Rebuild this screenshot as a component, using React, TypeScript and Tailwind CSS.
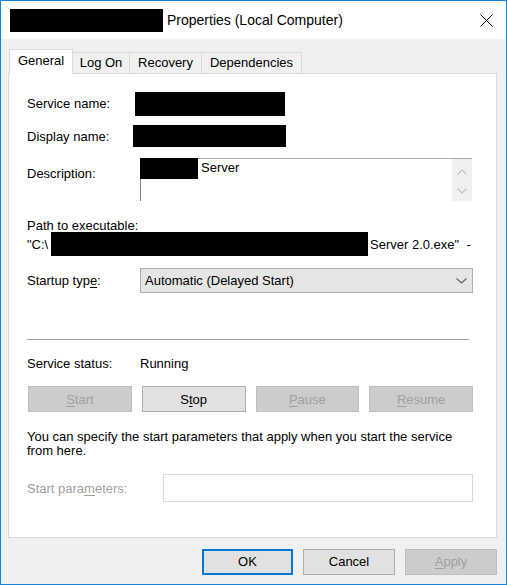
const font = "font-['Liberation_Sans',Arial,sans-serif]";

function Tab({ label, active, w }: { label: string; active?: boolean; w: string }) {
  return active ? (
    <div className={`relative z-10 -mb-px flex h-[25px] items-center justify-center border border-b-0 border-[#d9d9d9] bg-white pb-[2px] text-[13px] ${w}`}>
      {label}
    </div>
  ) : (
    <div className={`-ml-px flex h-[21px] items-center justify-center border border-b-0 border-[#d9d9d9] bg-[#f0f0f0] text-[13px] ${w}`}>
      {label}
    </div>
  );
}

function Btn({ children, disabled, primary, className = '' }: { children: React.ReactNode; disabled?: boolean; primary?: boolean; className?: string }) {
  const look = disabled
    ? 'bg-[#cccccc] border border-[#bfbfbf] text-[#a0a0a0]'
    : primary
    ? 'bg-[#e1e1e1] border-2 border-[#0078d7] text-black'
    : 'bg-[#e1e1e1] border border-[#adadad] text-black';
  return <div className={`flex h-[26px] items-center justify-center text-[13px] ${look} ${className}`}>{children}</div>;
}

function Chevron({ up, color = '#c2c2c2' }: { up?: boolean; color?: string }) {
  return (
    <svg width="10" height="6" viewBox="0 0 10 6">
      <path d={up ? 'M0.5 5.5 L5 1 L9.5 5.5' : 'M0.5 0.5 L5 5 L9.5 0.5'} fill="none" stroke={color} strokeWidth="1.2" />
    </svg>
  );
}

export default function App() {
  return (
    <div className={`flex h-[585px] w-[507px] flex-col border border-[#1883d7] bg-[#f0f0f0] text-black ${font}`}>
      {/* title bar */}
      <div className="flex h-[38px] items-center bg-white">
        <div className="ml-[9px] h-[23px] w-[153px] bg-black" />
        <div className="ml-[4px] text-[14px] leading-none">Properties (Local Computer)</div>
        <div className="ml-auto mr-[13px] flex items-center">
          <svg width="13" height="13" viewBox="0 0 13 13">
            <path d="M0.5 0.5 L12.5 12.5 M12.5 0.5 L0.5 12.5" stroke="#000" strokeWidth="1" />
          </svg>
        </div>
      </div>

      <div className="flex flex-1 flex-col pl-[7px] pr-[9px]">
        {/* tabs */}
        <div className="flex h-[34px] items-end pl-px">
          <Tab label="General" active w="w-[64px]" />
          <Tab label="Log On" w="w-[58px]" />
          <Tab label="Recovery" w="w-[73px]" />
          <Tab label="Dependencies" w="w-[101px]" />
        </div>

        {/* panel */}
        <div className="flex h-[465px] flex-col border border-[#d9d9d9] bg-white pl-[18px] pr-[23px] pt-[18px] text-[13px] leading-[15px]">
          <div className="flex h-[24px] items-center">
            <div className="w-[108px] pb-[2px]">Service name:</div>
            <div className="h-[24px] w-[150px] bg-black" />
          </div>
          <div className="mt-[9px] flex h-[22px] items-center">
            <div className="w-[106px]">Display name:</div>
            <div className="h-[22px] w-[153px] bg-black" />
          </div>
          <div className="mt-[11px] flex h-[43px] items-start">
            <div className="mt-[8px] w-[113px]">Description:</div>
            <div className="mr-px flex h-[43px] flex-1 border-l border-t border-l-[#828282] border-t-[#ababab]">
              <div className="flex flex-1 items-start">
                <div className="-ml-px -mt-px h-[21px] w-[58px] bg-black" />
                <span className="ml-[3px] mt-[1px]">Server</span>
              </div>
              <div className="flex w-[20px] flex-col items-center gap-[13px] bg-[#f0f0f0] pt-[10px]">
                <Chevron up />
                <Chevron />
              </div>
            </div>
          </div>

          <div className="mt-[17px] h-[15px]">Path to executable:</div>
          <div className="-mt-px flex h-[24px] items-center whitespace-pre">
            <span className="w-[24px]">"C:\</span>
            <div className="h-[24px] w-[317px] bg-black" />
            <span className="ml-[2px]">Server 2.0.exe"  -</span>
          </div>

          <div className="mt-[12px] flex h-[25px] items-center">
            <div className="w-[113px]">
              Startup typ<span className="underline underline-offset-2">e</span>:
            </div>
            <div className="flex h-[25px] flex-1 items-center border border-[#adadad] bg-[#e5e5e5] pl-[4px] pr-[5px]">
              <span>Automatic (Delayed Start)</span>
              <span className="ml-auto flex">
                <svg width="11" height="6" viewBox="0 0 11 6">
                  <path d="M0.5 0.5 L5.5 5 L10.5 0.5" fill="none" stroke="#606060" strokeWidth="1.1" />
                </svg>
              </span>
            </div>
          </div>

          <div className="mr-[4px] mt-[46px] h-px bg-[#a0a0a0]" />

          <div className="mt-[16px] flex h-[15px] items-center">
            <div className="w-[113px]">Service status:</div>
            <div>Running</div>
          </div>

          <div className="mt-[15px] ml-px grid h-[25px] grid-cols-4 gap-[10px]">
            <Btn disabled className="h-[25px]"><span className="underline underline-offset-2">S</span>tart</Btn>
            <Btn className="h-[25px]">S<span className="underline underline-offset-2">t</span>op</Btn>
            <Btn disabled className="h-[25px]"><span className="underline underline-offset-2">P</span>ause</Btn>
            <Btn disabled className="h-[25px]"><span className="underline underline-offset-2">R</span>esume</Btn>
          </div>

          <p className="mt-[19px] leading-[14px]">
            You can specify the start parameters that apply when you start the service from here.
          </p>

          <div className="mt-[16px] flex h-[28px] items-center">
            <div className="w-[136px] text-[#a0a0a0]">
              Start para<span className="underline underline-offset-2">m</span>eters:
            </div>
            <div className="h-[28px] flex-1 border border-[#d9d9d9] bg-white" />
          </div>
        </div>

        {/* dialog buttons */}
        <div className="mt-[11px] flex justify-end gap-[10px]">
          <Btn primary className="w-[91px]">OK</Btn>
          <Btn className="w-[92px]">Cancel</Btn>
          <Btn disabled className="w-[92px]"><span className="underline underline-offset-2">A</span>pply</Btn>
        </div>
      </div>
    </div>
  );
}
